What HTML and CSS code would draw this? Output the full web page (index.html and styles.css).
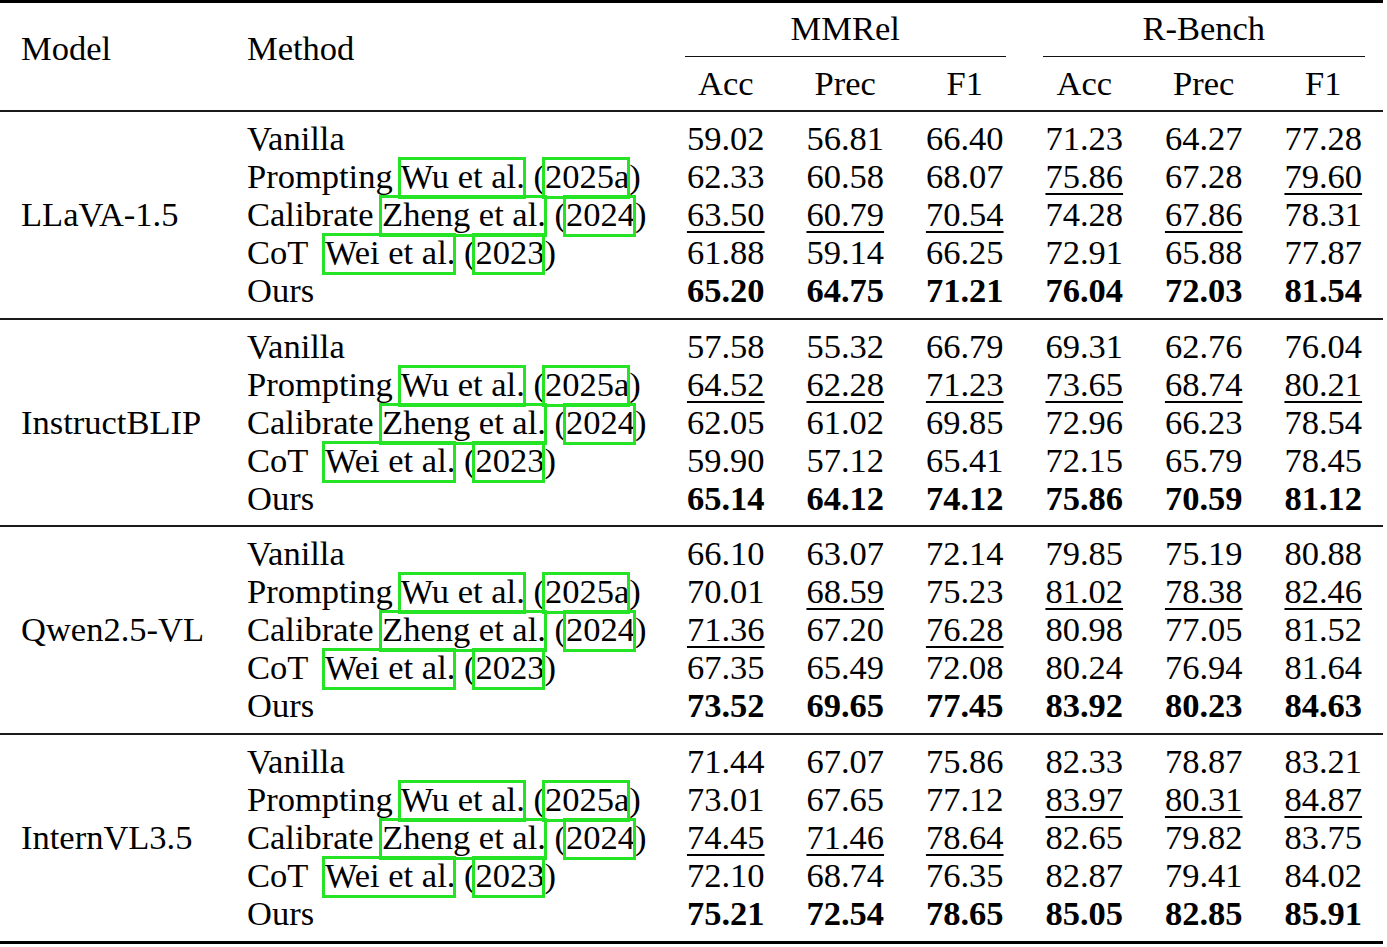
FILE: index.html
```html
<!DOCTYPE html>
<html lang="en">
<head>
<meta charset="utf-8">
<title>Results table</title>
<link rel="stylesheet" href="styles.css">
</head>
<body>
<div class="table">
  <div class="thead">
    <div class="hmodel">Model</div>
    <div class="hmethod">Method</div>
    <div class="bench">MMRel</div>
    <div class="bench">R-Bench</div>
    <div class="sub">Acc</div><div class="sub">Prec</div><div class="sub">F1</div>
    <div class="sub">Acc</div><div class="sub">Prec</div><div class="sub">F1</div>
  </div>

  <div class="group">
    <div class="model">LLaVA-1.5</div>
    <div class="method">Vanilla</div>
    <div class="num">59.02</div><div class="num">56.81</div><div class="num">66.40</div><div class="num">71.23</div><div class="num">64.27</div><div class="num">77.28</div>
    <div class="method">Prompting <span class="cite">Wu et al.</span> (<span class="cite">2025a</span>)</div>
    <div class="num">62.33</div><div class="num">60.58</div><div class="num">68.07</div><div class="num"><u>75.86</u></div><div class="num">67.28</div><div class="num"><u>79.60</u></div>
    <div class="method">Calibrate <span class="cite">Zheng et al.</span> (<span class="cite">2024</span>)</div>
    <div class="num"><u>63.50</u></div><div class="num"><u>60.79</u></div><div class="num"><u>70.54</u></div><div class="num">74.28</div><div class="num"><u>67.86</u></div><div class="num">78.31</div>
    <div class="method">CoT &nbsp;<span class="cite">Wei et al.</span> (<span class="cite">2023</span>)</div>
    <div class="num">61.88</div><div class="num">59.14</div><div class="num">66.25</div><div class="num">72.91</div><div class="num">65.88</div><div class="num">77.87</div>
    <div class="method">Ours</div>
    <div class="num best">65.20</div><div class="num best">64.75</div><div class="num best">71.21</div><div class="num best">76.04</div><div class="num best">72.03</div><div class="num best">81.54</div>
  </div>

  <div class="group">
    <div class="model">InstructBLIP</div>
    <div class="method">Vanilla</div>
    <div class="num">57.58</div><div class="num">55.32</div><div class="num">66.79</div><div class="num">69.31</div><div class="num">62.76</div><div class="num">76.04</div>
    <div class="method">Prompting <span class="cite">Wu et al.</span> (<span class="cite">2025a</span>)</div>
    <div class="num"><u>64.52</u></div><div class="num"><u>62.28</u></div><div class="num"><u>71.23</u></div><div class="num"><u>73.65</u></div><div class="num"><u>68.74</u></div><div class="num"><u>80.21</u></div>
    <div class="method">Calibrate <span class="cite">Zheng et al.</span> (<span class="cite">2024</span>)</div>
    <div class="num">62.05</div><div class="num">61.02</div><div class="num">69.85</div><div class="num">72.96</div><div class="num">66.23</div><div class="num">78.54</div>
    <div class="method">CoT &nbsp;<span class="cite">Wei et al.</span> (<span class="cite">2023</span>)</div>
    <div class="num">59.90</div><div class="num">57.12</div><div class="num">65.41</div><div class="num">72.15</div><div class="num">65.79</div><div class="num">78.45</div>
    <div class="method">Ours</div>
    <div class="num best">65.14</div><div class="num best">64.12</div><div class="num best">74.12</div><div class="num best">75.86</div><div class="num best">70.59</div><div class="num best">81.12</div>
  </div>

  <div class="group">
    <div class="model">Qwen2.5-VL</div>
    <div class="method">Vanilla</div>
    <div class="num">66.10</div><div class="num">63.07</div><div class="num">72.14</div><div class="num">79.85</div><div class="num">75.19</div><div class="num">80.88</div>
    <div class="method">Prompting <span class="cite">Wu et al.</span> (<span class="cite">2025a</span>)</div>
    <div class="num">70.01</div><div class="num"><u>68.59</u></div><div class="num">75.23</div><div class="num"><u>81.02</u></div><div class="num"><u>78.38</u></div><div class="num"><u>82.46</u></div>
    <div class="method">Calibrate <span class="cite">Zheng et al.</span> (<span class="cite">2024</span>)</div>
    <div class="num"><u>71.36</u></div><div class="num">67.20</div><div class="num"><u>76.28</u></div><div class="num">80.98</div><div class="num">77.05</div><div class="num">81.52</div>
    <div class="method">CoT &nbsp;<span class="cite">Wei et al.</span> (<span class="cite">2023</span>)</div>
    <div class="num">67.35</div><div class="num">65.49</div><div class="num">72.08</div><div class="num">80.24</div><div class="num">76.94</div><div class="num">81.64</div>
    <div class="method">Ours</div>
    <div class="num best">73.52</div><div class="num best">69.65</div><div class="num best">77.45</div><div class="num best">83.92</div><div class="num best">80.23</div><div class="num best">84.63</div>
  </div>

  <div class="group last">
    <div class="model">InternVL3.5</div>
    <div class="method">Vanilla</div>
    <div class="num">71.44</div><div class="num">67.07</div><div class="num">75.86</div><div class="num">82.33</div><div class="num">78.87</div><div class="num">83.21</div>
    <div class="method">Prompting <span class="cite">Wu et al.</span> (<span class="cite">2025a</span>)</div>
    <div class="num">73.01</div><div class="num">67.65</div><div class="num">77.12</div><div class="num"><u>83.97</u></div><div class="num"><u>80.31</u></div><div class="num"><u>84.87</u></div>
    <div class="method">Calibrate <span class="cite">Zheng et al.</span> (<span class="cite">2024</span>)</div>
    <div class="num"><u>74.45</u></div><div class="num"><u>71.46</u></div><div class="num"><u>78.64</u></div><div class="num">82.65</div><div class="num">79.82</div><div class="num">83.75</div>
    <div class="method">CoT &nbsp;<span class="cite">Wei et al.</span> (<span class="cite">2023</span>)</div>
    <div class="num">72.10</div><div class="num">68.74</div><div class="num">76.35</div><div class="num">82.87</div><div class="num">79.41</div><div class="num">84.02</div>
    <div class="method">Ours</div>
    <div class="num best">75.21</div><div class="num best">72.54</div><div class="num best">78.65</div><div class="num best">85.05</div><div class="num best">82.85</div><div class="num best">85.91</div>
  </div>
</div>
</body>
</html>
```

FILE: styles.css
```css
html, body {
  margin: 0;
  padding: 0;
  background: #ffffff;
}

body {
  font-family: "Liberation Serif", "Times New Roman", serif;
  font-size: 34.5px;
  line-height: 38px;
  color: #000000;
}

.table {
  width: 1383px;
  border-top: 3px solid #000000;
  border-bottom: 3px solid #000000;
}

.thead,
.group {
  display: grid;
  grid-template-columns: 226px 440px repeat(6, 119.5px);
}

.thead {
  padding: 5.5px 0 8.5px;
  border-bottom: 2px solid #1a1a1a;
}

.hmodel,
.hmethod {
  grid-row: 1 / 3;
  padding: 20px 0 0 21px;
  white-space: nowrap;
}

.hmodel { grid-column: 1; }
.hmethod { grid-column: 2; }

.bench {
  grid-column: span 3;
  grid-row: 1;
  text-align: center;
  margin: 0 18.5px;
  padding-bottom: 9.5px;
  border-bottom: 1px solid #111111;
}

.sub {
  grid-row: 2;
  text-align: center;
  padding-top: 6.5px;
}

.group {
  grid-template-rows: repeat(5, 38px);
  padding: 7px 0 8.7px;
  border-bottom: 2px solid #1a1a1a;
}

.group.last {
  border-bottom: none;
}

.model {
  grid-column: 1;
  grid-row: 1 / 6;
  align-self: center;
  padding-left: 21px;
  white-space: nowrap;
}

.method {
  grid-column: 2;
  padding-left: 21px;
  white-space: nowrap;
}

.num {
  text-align: center;
  white-space: nowrap;
}

.num u {
  text-decoration: underline;
  text-decoration-thickness: 1.5px;
  text-underline-offset: 5px;
}

.best {
  font-weight: 700;
}

.cite {
  position: relative;
}

.cite::after {
  content: "";
  position: absolute;
  left: -3px;
  right: -1px;
  top: 0;
  bottom: -4px;
  border: 3px solid #25e325;
  pointer-events: none;
}
```
